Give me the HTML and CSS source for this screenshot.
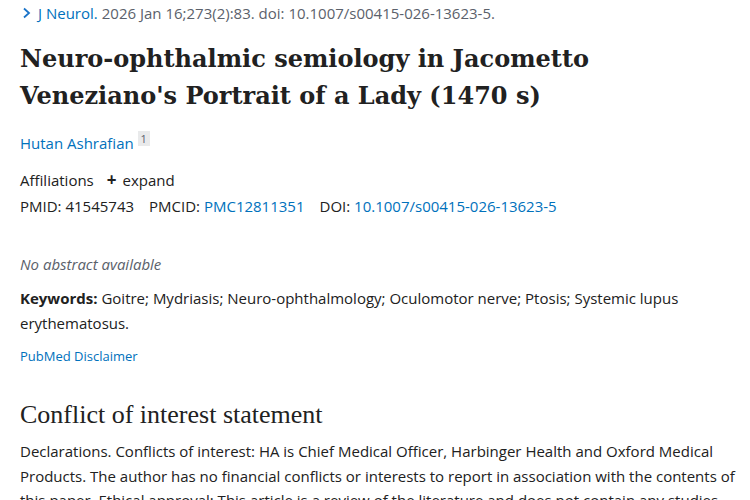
FILE: index.html
```html
<!DOCTYPE html>
<html>
<head>
<meta charset="utf-8">
<link rel="stylesheet" href="styles.css">
</head>
<body>
<main class="article">
  <div class="cit">
    <svg class="chev" width="10" height="12" viewBox="0 0 10 12"><path d="M2 1.5 L7 6 L2 10.5" fill="none" stroke="#1a73c8" stroke-width="1.8"/></svg>
    <a class="jrn">J Neurol.</a> 2026 Jan 16;273(2):83. doi: 10.1007/s00415-026-13623-5.
  </div>
  <h1 class="title">Neuro-ophthalmic semiology in Jacometto Veneziano's Portrait of a Lady (1470 s)</h1>
  <div class="authors"><a class="link">Hutan Ashrafian</a> <sup class="aff">1</sup></div>
  <div class="affs">Affiliations <span class="expand"><span class="plus">+</span> expand</span></div>
  <div class="ids">
    <span>PMID: 41545743</span>
    <span>PMCID: <a class="link">PMC12811351</a></span>
    <span>DOI: <a class="link">10.1007/s00415-026-13623-5</a></span>
  </div>
  <p class="noabs">No abstract available</p>
  <p class="kw"><b>Keywords:</b> Goitre; Mydriasis; Neuro-ophthalmology; Oculomotor nerve; Ptosis; Systemic lupus erythematosus.</p>
  <a class="disc">PubMed Disclaimer</a>
  <h2 class="sec">Conflict of interest statement</h2>
  <p class="body">Declarations. Conflicts of interest: HA is Chief Medical Officer, Harbinger Health and Oxford Medical Products. The author has no financial conflicts or interests to report in association with the contents of this paper. Ethical approval: This article is a review of the literature and does not contain any studies with human participants performed by the author.</p>
</main>
</body>
</html>
```
FILE: styles.css
```css
html, body { margin: 0; padding: 0; background: #fff; }
body { font-family: "Open Sans", "Noto Sans", sans-serif; color: #212121; font-size: 15px; }
.article { padding: 0 12px 0 20px; width: 750px; box-sizing: border-box; }
a { color: #0071bc; text-decoration: none; }
.cit { color: #5b616b; font-size: 15px; line-height: 22px; padding-top: 2px; display: flex; align-items: center; white-space: nowrap; }
.chev { margin: 0 6px 0 2px; }
.jrn { color: #0071bc; margin-right: 4px; }
.title { font-family: "DejaVu Serif", serif; font-weight: bold; font-size: 24px; line-height: 37px; margin: 16px 0 0; color: #212121; }
.authors { margin-top: 14px; line-height: 22px; }
.link { color: #0071bc; }
.aff { font-size: 11px; background: #e9eaeb; padding: 0 3px; color: #5b616b; vertical-align: 6px; }
.affs { margin-top: 15px; line-height: 22px; display: flex; gap: 13px; }
.expand { display: inline-flex; gap: 6px; }
.plus { font-weight: bold; font-size: 17px; }
.ids { margin-top: 4px; line-height: 22px; display: flex; gap: 15px; }
.noabs { font-style: italic; color: #5b616b; margin: 36px 0 0; line-height: 22px; }
.kw { margin: 11px 0 0; line-height: 25px; }
.disc { display: block; font-size: 13px; margin-top: 10px; line-height: 20px; }
.sec { font-family: "Liberation Serif", serif; font-weight: normal; font-size: 26px; margin: 34px 0 0; line-height: 30px; }
.body { margin: 9px 0 0; line-height: 24.5px; }
```
